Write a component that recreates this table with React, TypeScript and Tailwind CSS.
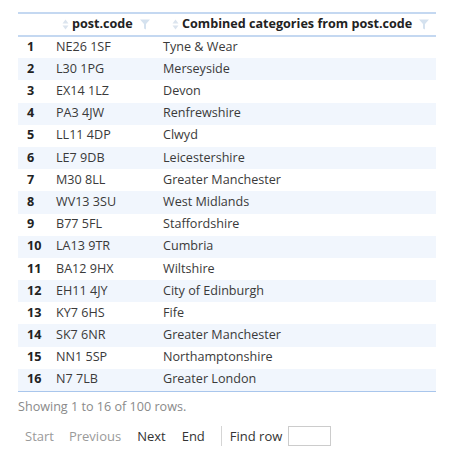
import React from "react";

const rows: [string, string][] = [
  ["NE26 1SF", "Tyne & Wear"],
  ["L30 1PG", "Merseyside"],
  ["EX14 1LZ", "Devon"],
  ["PA3 4JW", "Renfrewshire"],
  ["LL11 4DP", "Clwyd"],
  ["LE7 9DB", "Leicestershire"],
  ["M30 8LL", "Greater Manchester"],
  ["WV13 3SU", "West Midlands"],
  ["B77 5FL", "Staffordshire"],
  ["LA13 9TR", "Cumbria"],
  ["BA12 9HX", "Wiltshire"],
  ["EH11 4JY", "City of Edinburgh"],
  ["KY7 6HS", "Fife"],
  ["SK7 6NR", "Greater Manchester"],
  ["NN1 5SP", "Northamptonshire"],
  ["N7 7LB", "Greater London"],
];

function SortIcon() {
  return (
    <svg width="7" height="11" viewBox="0 0 7 11" className="shrink-0">
      <path d="M3.5 0.5 L6.5 4.5 L0.5 4.5 Z" fill="#dbe4ee" />
      <path d="M3.5 10.5 L6.5 6.5 L0.5 6.5 Z" fill="#dbe4ee" />
    </svg>
  );
}

function FilterIcon() {
  return (
    <svg width="10" height="11" viewBox="0 0 10 11" className="shrink-0">
      <path d="M0 0.5 L10 0.5 L6 5 L6 10.5 L4 9.5 L4 5 Z" fill="#d5e2ef" />
    </svg>
  );
}

export default function App() {
  return (
    <div
      className="w-[474px] h-[467px] bg-white text-[12.6px] text-[#333]"
      style={{ fontFamily: "'Open Sans', 'Liberation Sans', sans-serif" }}
    >
      <div className="pl-[18px] pt-[12px] w-[436px]">
        <table className="w-[418px] border-collapse table-fixed">
          <colgroup>
            <col className="w-[29px]" />
            <col className="w-[107px]" />
            <col />
          </colgroup>
          <thead>
            <tr className="h-[23px] border-t-2 border-b-2 border-[#c4d8f1]">
              <th />
              <th className="p-0">
                <div className="flex items-center pl-[15px] pr-[4px] font-bold text-[#222] whitespace-nowrap">
                  <SortIcon />
                  <span className="ml-[3px] flex-1 text-left">post.code</span>
                  <FilterIcon />
                </div>
              </th>
              <th className="p-0">
                <div className="flex items-center pl-[18px] pr-[7px] font-bold text-[#222] whitespace-nowrap">
                  <SortIcon />
                  <span className="ml-[3px] flex-1 text-left">Combined categories from post.code</span>
                  <FilterIcon />
                </div>
              </th>
            </tr>
          </thead>
          <tbody className="border-b border-[#a9c6ec]">
            {rows.map(([code, cat], i) => (
              <tr key={i} className={`h-[22.2px] ${i % 2 === 1 ? "bg-[#f1f6fd]" : "bg-white"}`}>
                <td className="pl-[9px] p-0 font-bold text-[#222]">{i + 1}</td>
                <td className="pl-[9px] p-0 text-[#3a3a3a]">{code}</td>
                <td className="pl-[9px] p-0 text-[#3a3a3a]">{cat}</td>
              </tr>
            ))}
          </tbody>
        </table>
        <div className="mt-[6px] text-[#8a8a8a]">Showing 1 to 16 of 100 rows.</div>
        <div className="mt-[10px] flex items-center pl-[7px] text-[13px]">
          <span className="text-[#9a9a9a]">Start</span>
          <span className="ml-[15px] text-[#9a9a9a]">Previous</span>
          <span className="ml-[16px] text-[#333]">Next</span>
          <span className="ml-[16px] text-[#333]">End</span>
          <span className="ml-[16px] h-[20px] w-px bg-[#d5d5d5]" />
          <span className="ml-[8px] text-[#333]">Find row</span>
          <span className="ml-[6px] h-[20px] w-[43px] border border-[#ccc] bg-white" />
        </div>
      </div>
    </div>
  );
}
